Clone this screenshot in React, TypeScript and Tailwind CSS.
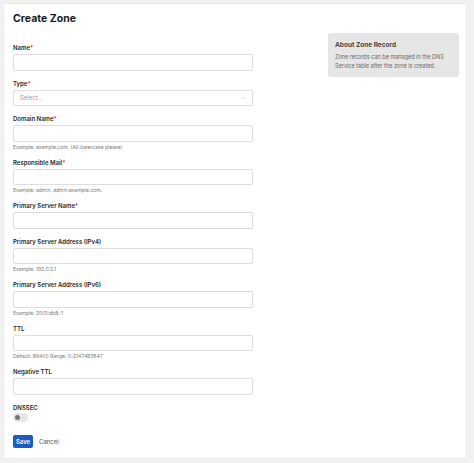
import { ChevronDown } from "lucide-react";

type Field = {
  name: string;
  label: string;
  required?: boolean;
  help?: string;
  select?: boolean;
};

const fields: Field[] = [
  { name: "name", label: "Name", required: true },
  { name: "type", label: "Type", required: true, select: true },
  { name: "domain", label: "Domain Name", required: true, help: "Example: example.com. (All lowercase please)" },
  { name: "mail", label: "Responsible Mail", required: true, help: "Example: admin. admin.example.com." },
  { name: "primary", label: "Primary Server Name", required: true },
  { name: "ipv4", label: "Primary Server Address (IPv4)", help: "Example: 192.0.2.1" },
  { name: "ipv6", label: "Primary Server Address (IPv6)", help: "Example: 2001:db8::1" },
  { name: "ttl", label: "TTL", help: "Default: 86400 Range: 0-2147483647" },
  { name: "nttl", label: "Negative TTL" },
];

export default function App() {
  return (
    <div className="min-h-[463px] bg-[#f1f1f1] p-[3px] font-['Inter',sans-serif] text-[#222]">
      <div className="bg-white w-[464px] h-[456px] rounded-[2px] border border-[#ececec] pl-[9px] pr-[7px] pt-[8px] pb-[9px]">
        <h1 className="text-[10.5px] leading-[14px] font-bold text-[#1a1a1a] mb-[7px]">Create Zone</h1>
        <div className="flex justify-between">
          <form className="w-[240px] pt-[11px] flex flex-col gap-[9px]">
            {fields.map((f) => (
              <div key={f.name} className="flex flex-col">
                <label className="text-[6px] leading-[8px] font-semibold text-[#2a2a2a]">
                  {f.label}
                  {f.required && <span className="text-[#d0021b]">*</span>}
                </label>
                {f.select ? (
                  <div className="mt-[2px] h-[16.5px] border border-[#dedede] rounded-[2px] flex items-center justify-between px-[6px]">
                    <span className="text-[6px] text-[#999]">Select...</span>
                    <ChevronDown className="w-[6px] h-[6px] text-[#bbb]" strokeWidth={2} />
                  </div>
                ) : (
                  <input className="mt-[2px] h-[16.5px] border border-[#dedede] rounded-[2px] outline-none" />
                )}
                {f.help && (
                  <p className="mt-[2px] text-[5px] leading-[6px] text-[#7a7a7a]">{f.help}</p>
                )}
              </div>
            ))}
            <div className="flex flex-col">
              <label className="text-[6px] leading-[8px] font-semibold text-[#2a2a2a]">DNSSEC</label>
              <div className="mt-[1px] w-[15px] h-[9px] rounded-full bg-[#e6e6e6] flex items-center px-[2px]">
                <div className="w-[5px] h-[5px] rounded-full bg-[#777]" />
              </div>
            </div>
            <div className="flex items-center gap-[6px] mt-[4px]">
              <button type="button" className="bg-[#1c5cbf] text-white text-[6px] font-semibold h-[13px] w-[20px] rounded-[2px]">
                Save
              </button>
              <button type="button" className="text-[6px] text-[#555]">
                Cancel
              </button>
            </div>
          </form>
          <div className="w-[131px] h-[44px] bg-[#e6e6e6] rounded-[3px] px-[7px] pt-[8px]">
            <h2 className="text-[6.5px] leading-[8px] font-bold text-[#444]">About Zone Record</h2>
            <p className="mt-[4px] text-[5.5px] leading-[9px] text-[#666]">
              Zone records can be managed in the DNS Service table after the zone is created.
            </p>
          </div>
        </div>
      </div>
    </div>
  );
}
